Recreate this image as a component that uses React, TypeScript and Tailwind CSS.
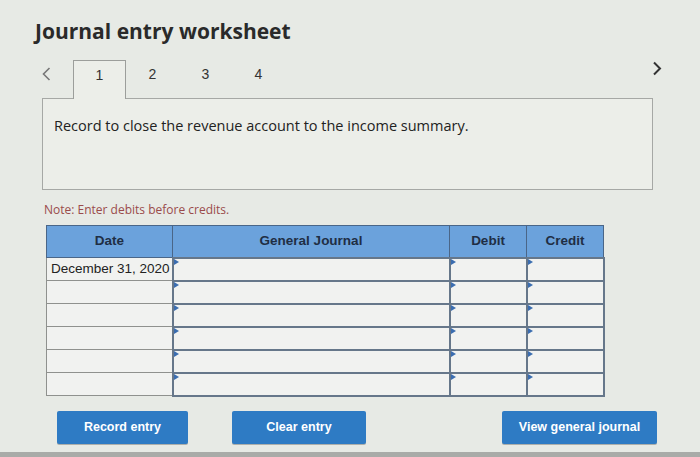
import React from 'react';

const rows = ['December 31, 2020', '', '', '', '', ''];

const Marker = () => (
  <span className="absolute left-0 top-0 w-0 h-0 border-t-[3px] border-b-[3px] border-l-[5px] border-t-transparent border-b-transparent border-l-[#3b6db0]" />
);

const InputCell = () => (
  <td className="h-[23px] p-0 border-2 border-[#66778a] bg-[#f1f2f0] relative">
    <Marker />
  </td>
);

const ActionButton: React.FC<{ label: string; className: string }> = ({ label, className }) => (
  <button
    className={`h-[33px] bg-[#2e7bc4] text-white text-[12.5px] font-bold rounded-[2px] shadow-[0_1px_0_rgba(0,0,0,0.25)] ${className}`}
  >
    {label}
  </button>
);

export default function App() {
  return (
    <div className="w-[700px] h-[457px] overflow-hidden bg-[#e7eae5] flex flex-col font-['Liberation_Sans',Arial,sans-serif] text-[#222]">
      <h1 className="pt-[19px] pl-[35px] text-[21px] leading-[24px] font-bold text-[#2a2a2a] font-['Open_Sans',sans-serif]">
        Journal entry worksheet
      </h1>

      {/* step tabs */}
      <div className="mt-[17px] flex items-start pl-[42px] pr-[38px]">
        <div className="w-[31px] pt-[7px]">
          <svg width="9" height="14" viewBox="0 0 9 14">
            <polyline points="7.5,1 1.5,7 7.5,13" fill="none" stroke="#777" strokeWidth="1.6" />
          </svg>
        </div>
        <div className="flex text-[14px] text-[#333]">
          <div className="w-[53px] h-[39px] -mb-px relative z-10 border border-b-0 border-[#9c9e9b] bg-[#eceee9] flex justify-center pt-[5px] leading-[18px]">
            1
          </div>
          <div className="w-[53px] flex justify-center pt-[5px] leading-[18px]">2</div>
          <div className="w-[53px] flex justify-center pt-[5px] leading-[18px]">3</div>
          <div className="w-[53px] flex justify-center pt-[5px] leading-[18px]">4</div>
        </div>
        <div className="ml-auto pt-[1px]">
          <svg width="10" height="15" viewBox="0 0 10 15">
            <polyline points="2,1.5 8,7.5 2,13.5" fill="none" stroke="#333" strokeWidth="2" />
          </svg>
        </div>
      </div>

      <div className="ml-[42px] w-[611px] h-[92px] border border-[#a6a8a5] bg-[#eceee9] pt-[18px] pl-[11px] text-[14.5px] leading-[18px] text-[#222] font-['Open_Sans',sans-serif]">
        Record to close the revenue account to the income summary.
      </div>

      <p className="mt-[12px] ml-[44px] text-[12px] leading-[16px] text-[#9a4b4b] font-['Open_Sans',sans-serif]">
        Note: Enter debits before credits.
      </p>

      <table className="mt-[7px] ml-[46px] w-[557px] table-fixed border-collapse text-[13.5px]">
        <colgroup>
          <col className="w-[126px]" />
          <col className="w-[277px]" />
          <col className="w-[77px]" />
          <col className="w-[77px]" />
        </colgroup>
        <thead>
          <tr className="h-[32px] bg-[#6ba2dc] text-[#1f2e44]">
            <th className="p-0 border border-[#4a6688] font-bold">Date</th>
            <th className="p-0 border border-[#4a6688] font-bold">General Journal</th>
            <th className="p-0 border border-[#4a6688] font-bold">Debit</th>
            <th className="p-0 border border-[#4a6688] font-bold">Credit</th>
          </tr>
        </thead>
        <tbody>
          {rows.map((d, i) => (
            <tr key={i}>
              <td className="h-[23px] p-0 pl-[4px] border border-[#8f918e] bg-[#f1f2f0] leading-[18px] text-[#222] whitespace-nowrap overflow-hidden">
                {d}
              </td>
              <InputCell />
              <InputCell />
              <InputCell />
            </tr>
          ))}
        </tbody>
      </table>

      <div className="mt-[14px] flex items-start">
        <ActionButton label="Record entry" className="ml-[57px] w-[131px]" />
        <ActionButton label="Clear entry" className="ml-[44px] w-[134px]" />
        <ActionButton label="View general journal" className="ml-[136px] w-[155px]" />
      </div>

      <div className="mt-auto h-[5px] bg-[#a9aba8]" />
    </div>
  );
}
